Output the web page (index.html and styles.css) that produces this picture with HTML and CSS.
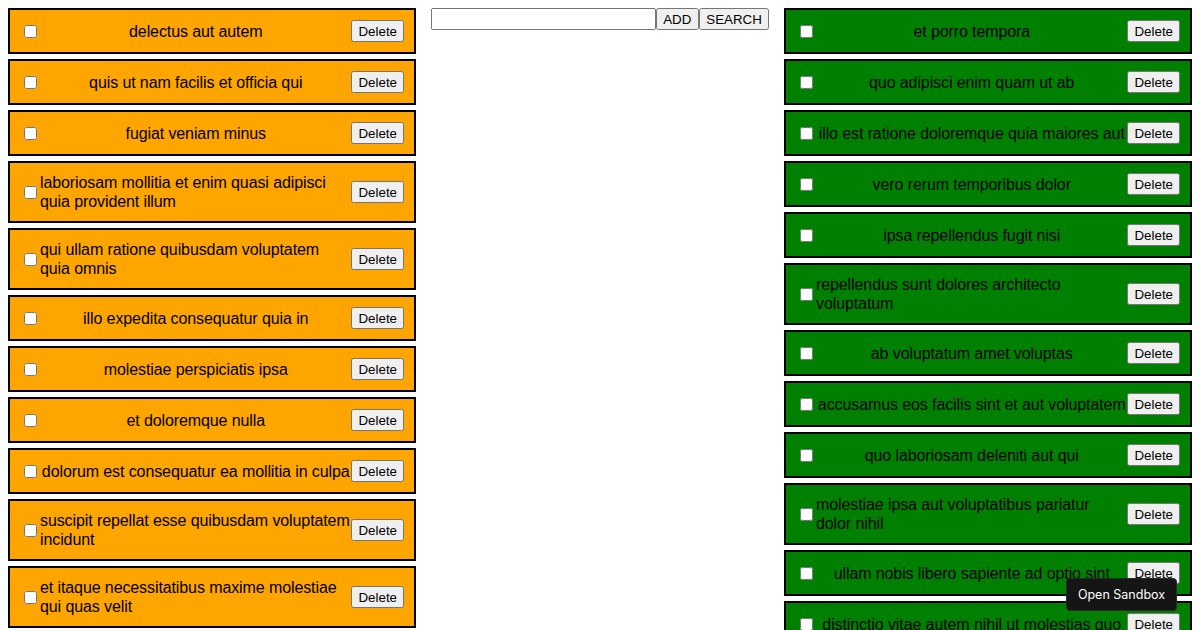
FILE: index.html
```html
<!DOCTYPE html>
<html>
<head>
<meta charset="utf-8">
<link rel="stylesheet" href="styles.css">
</head>
<body>
<div class="app">
  <div class="list">
    <div class="item orange"><input type="checkbox" class="check"><span class="title">delectus aut autem</span><button class="del">Delete</button></div>
    <div class="item orange"><input type="checkbox" class="check"><span class="title">quis ut nam facilis et officia qui</span><button class="del">Delete</button></div>
    <div class="item orange"><input type="checkbox" class="check"><span class="title">fugiat veniam minus</span><button class="del">Delete</button></div>
    <div class="item orange"><input type="checkbox" class="check"><span class="title">laboriosam mollitia et enim quasi adipisci quia provident illum</span><button class="del">Delete</button></div>
    <div class="item orange"><input type="checkbox" class="check"><span class="title">qui ullam ratione quibusdam voluptatem quia omnis</span><button class="del">Delete</button></div>
    <div class="item orange"><input type="checkbox" class="check"><span class="title">illo expedita consequatur quia in</span><button class="del">Delete</button></div>
    <div class="item orange"><input type="checkbox" class="check"><span class="title">molestiae perspiciatis ipsa</span><button class="del">Delete</button></div>
    <div class="item orange"><input type="checkbox" class="check"><span class="title">et doloremque nulla</span><button class="del">Delete</button></div>
    <div class="item orange"><input type="checkbox" class="check"><span class="title">dolorum est consequatur ea mollitia in culpa</span><button class="del">Delete</button></div>
    <div class="item orange"><input type="checkbox" class="check"><span class="title">suscipit repellat esse quibusdam voluptatem incidunt</span><button class="del">Delete</button></div>
    <div class="item orange"><input type="checkbox" class="check"><span class="title">et itaque necessitatibus maxime molestiae qui quas velit</span><button class="del">Delete</button></div>
    <div class="item orange"><input type="checkbox" class="check"><span class="title">quo adipisci enim quam ut ab</span><button class="del">Delete</button></div>
  </div>
  <div class="controls">
    <input type="text" class="field"><button class="btn">ADD</button><button class="btn">SEARCH</button>
  </div>
  <div class="list">
    <div class="item green"><input type="checkbox" class="check"><span class="title">et porro tempora</span><button class="del">Delete</button></div>
    <div class="item green"><input type="checkbox" class="check"><span class="title">quo adipisci enim quam ut ab</span><button class="del">Delete</button></div>
    <div class="item green"><input type="checkbox" class="check"><span class="title">illo est ratione doloremque quia maiores aut</span><button class="del">Delete</button></div>
    <div class="item green"><input type="checkbox" class="check"><span class="title">vero rerum temporibus dolor</span><button class="del">Delete</button></div>
    <div class="item green"><input type="checkbox" class="check"><span class="title">ipsa repellendus fugit nisi</span><button class="del">Delete</button></div>
    <div class="item green"><input type="checkbox" class="check"><span class="title">repellendus sunt dolores architecto voluptatum</span><button class="del">Delete</button></div>
    <div class="item green"><input type="checkbox" class="check"><span class="title">ab voluptatum amet voluptas</span><button class="del">Delete</button></div>
    <div class="item green"><input type="checkbox" class="check"><span class="title">accusamus eos facilis sint et aut voluptatem</span><button class="del">Delete</button></div>
    <div class="item green"><input type="checkbox" class="check"><span class="title">quo laboriosam deleniti aut qui</span><button class="del">Delete</button></div>
    <div class="item green"><input type="checkbox" class="check"><span class="title">molestiae ipsa aut voluptatibus pariatur dolor nihil</span><button class="del">Delete</button></div>
    <div class="item green"><input type="checkbox" class="check"><span class="title">ullam nobis libero sapiente ad optio sint</span><button class="del">Delete</button></div>
    <div class="item green"><input type="checkbox" class="check"><span class="title">distinctio vitae autem nihil ut molestias quo</span><button class="del">Delete</button></div>
  </div>
</div>
<div class="sandbox">Open Sandbox</div>
</body>
</html>
```
FILE: styles.css
```css
html, body {
  overflow: hidden;
}
body {
  margin: 8px;
  font-family: "Liberation Sans", Arial, sans-serif;
  font-size: 16px;
  color: #000;
  background: #fff;
}
.app {
  display: grid;
  grid-template-columns: 408px 1fr 408px;
  align-items: start;
}
.list {
  display: flex;
  flex-direction: column;
  gap: 5px;
}
.item {
  display: flex;
  align-items: center;
  border: 2px solid #000;
  padding: 10px;
  min-height: 22px;
}
.orange { background: #ffa500; }
.green { background: #008000; }
.check {
  width: 13px;
  height: 13px;
  margin: 3px 3px 3px 4px;
  flex: none;
}
.title {
  margin: 0 auto;
  text-align: left;
  line-height: 19px;
  letter-spacing: -0.1px;
}
.del {
  flex: none;
  font-family: "Liberation Sans", Arial, sans-serif;
  font-size: 13.333px;
  height: 22px;
  padding: 1px 5px;
}
.controls {
  display: flex;
  justify-content: center;
  align-items: stretch;
}
.field {
  box-sizing: border-box;
  width: 225px;
  height: 22px;
  margin: 0;
}
.btn {
  font-family: "Liberation Sans", Arial, sans-serif;
  font-size: 13.333px;
  height: 22px;
  padding: 1px 5.5px;
  margin: 0;
}
.sandbox {
  position: fixed;
  right: 23px;
  bottom: 19px;
  width: 111px;
  height: 33px;
  box-sizing: border-box;
  display: flex;
  align-items: center;
  justify-content: center;
  background: #151515;
  border: 1px solid #2a2a2a;
  border-radius: 4px;
  color: #fff;
  font-family: Inter, "Noto Sans", sans-serif;
  font-size: 12.5px;
}
```
